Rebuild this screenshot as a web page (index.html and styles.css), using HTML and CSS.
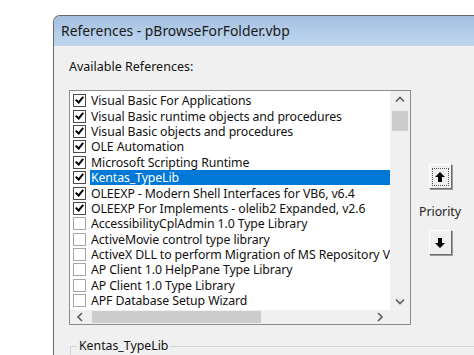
FILE: index.html
```html
<!DOCTYPE html>
<html>
<head>
<meta charset="utf-8">
<link rel="stylesheet" href="styles.css">
</head>
<body>
<div class="dialog">
  <div class="titlebar">References - pBrowseForFolder.vbp</div>
  <div class="client">
    <div class="label">Available References:</div>
    <div class="main">
      <div class="listbox">
        <div class="listarea">
          <div class="items">
            <div class="item"><span class="cb on"></span><span class="txt">Visual Basic For Applications</span></div>
            <div class="item"><span class="cb on"></span><span class="txt">Visual Basic runtime objects and procedures</span></div>
            <div class="item"><span class="cb on"></span><span class="txt">Visual Basic objects and procedures</span></div>
            <div class="item"><span class="cb on"></span><span class="txt">OLE Automation</span></div>
            <div class="item"><span class="cb on"></span><span class="txt">Microsoft Scripting Runtime</span></div>
            <div class="item sel"><span class="cb on"></span><span class="txt">Kentas_TypeLib</span></div>
            <div class="item"><span class="cb on"></span><span class="txt">OLEEXP - Modern Shell Interfaces for VB6, v6.4</span></div>
            <div class="item"><span class="cb on"></span><span class="txt">OLEEXP For Implements - olelib2 Expanded, v2.6</span></div>
            <div class="item"><span class="cb"></span><span class="txt">AccessibilityCplAdmin 1.0 Type Library</span></div>
            <div class="item"><span class="cb"></span><span class="txt">ActiveMovie control type library</span></div>
            <div class="item"><span class="cb"></span><span class="txt">ActiveX DLL to perform Migration of MS Repository V1</span></div>
            <div class="item"><span class="cb"></span><span class="txt">AP Client 1.0 HelpPane Type Library</span></div>
            <div class="item"><span class="cb"></span><span class="txt">AP Client 1.0 Type Library</span></div>
            <div class="item"><span class="cb"></span><span class="txt">APF Database Setup Wizard</span></div>
          </div>
          <div class="vscroll">
            <svg class="arr" width="20" height="17" viewBox="0 0 20 17"><path d="M6 10.5 L10 6.5 L14 10.5" fill="none" stroke="#606060" stroke-width="1.7"/></svg>
            <div class="vthumb"></div>
            <div class="vfill"></div>
            <svg class="arr" width="20" height="17" viewBox="0 0 20 17"><path d="M6 6.5 L10 10.5 L14 6.5" fill="none" stroke="#606060" stroke-width="1.7"/></svg>
          </div>
        </div>
        <div class="hrow">
          <div class="hscroll">
            <svg class="harr" width="20" height="14" viewBox="0 0 20 14"><path d="M12 3 L8 7 L12 11" fill="none" stroke="#606060" stroke-width="1.7"/></svg>
            <div class="hthumb"></div>
            <div class="hfill"></div>
            <svg class="harr" width="20" height="14" viewBox="0 0 20 14"><path d="M8 3 L12 7 L8 11" fill="none" stroke="#606060" stroke-width="1.7"/></svg>
          </div>
          <div class="corner"></div>
        </div>
      </div>
      <div class="side">
        <div class="btn"><span class="focusrect"><svg width="12" height="12" viewBox="0 0 12 12"><path d="M6 1 L11 6 L8 6 L8 11 L4 11 L4 6 L1 6 Z" fill="#000"/></svg></span></div>
        <div class="prio">Priority</div>
        <div class="btn"><svg width="12" height="12" viewBox="0 0 12 12"><path d="M6 11 L11 6 L8 6 L8 1 L4 1 L4 6 L1 6 Z" fill="#000"/></svg></div>
      </div>
    </div>
    <div class="group"><div class="glabel">Kentas_TypeLib</div></div>
  </div>
</div>
</body>
</html>
```
FILE: styles.css
```css
html, body {
  margin: 0;
  padding: 0;
  background: #ffffff;
  overflow: hidden;
  width: 474px;
  height: 355px;
}
body {
  font-family: "Noto Sans", "Open Sans", sans-serif;
  color: #000;
}
.dialog {
  margin-left: 53px;
  margin-top: 15px;
  width: 440px;
  height: 345px;
  border-left: 1px solid #6a6a6a;
  border-top: 1px solid #6a6a6a;
  border-radius: 7px 0 0 0;
  overflow: hidden;
  background: #f0f0f0;
}
.titlebar {
  height: 29px;
  line-height: 30px;
  padding-left: 7px;
  font-size: 13.9px;
  color: #1a1a1a;
  background: linear-gradient(to bottom, #a3bfdf 0%, #b5cee9 60%, #bcd4ee 100%);
  border-bottom: 1px solid #c6d6e8;
}
.client {
  padding-left: 15px;
  padding-top: 13px;
}
.label {
  font-size: 12.5px;
  line-height: 16px;
  color: #111;
}
.main {
  display: flex;
  margin-top: 15px;
}
.listbox {
  width: 340px;
  height: 233px;
  border: 1px solid #8c8c8c;
  background: #fff;
  display: flex;
  flex-direction: column;
}
.listarea {
  display: flex;
  height: 219px;
}
.items {
  flex: 1;
  overflow: hidden;
  padding-top: 2px;
}
.item {
  display: flex;
  align-items: center;
  height: 15.4px;
  font-size: 12.3px;
  white-space: nowrap;
  letter-spacing: -0.1px;
}
.cb {
  flex: none;
  width: 11px;
  height: 11px;
  border: 1px solid #a6a6a6;
  background: #fff;
  margin-left: 3px;
  margin-right: 4px;
  position: relative;
}
.cb.on {
  border-color: #4a4a4a;
}
.cb.on::after {
  content: "";
  position: absolute;
  left: 3px;
  top: 0px;
  width: 3px;
  height: 6px;
  border-right: 2px solid #000;
  border-bottom: 2px solid #000;
  transform: rotate(40deg);
}
.txt {
  padding-left: 1px;
  line-height: 15px;
  color: #111;
}
.item.sel .txt {
  flex: 1;
  background: #0078d7;
  color: #fff;
}
.vscroll {
  width: 20px;
  flex: none;
  background: #f0f0f0;
  display: flex;
  flex-direction: column;
}
.arr {
  display: block;
  flex: none;
}
.vthumb {
  height: 20px;
  margin: 3px 2px 0;
  background: #cdcdcd;
  flex: none;
}
.vfill {
  flex: 1;
}
.hrow {
  display: flex;
  height: 14px;
}
.hscroll {
  flex: 1;
  display: flex;
  background: #f0f0f0;
}
.harr {
  display: block;
  flex: none;
}
.hthumb {
  width: 169px;
  margin: 1px 0 1px 2px;
  background: #cdcdcd;
}
.hfill {
  flex: 1;
}
.corner {
  width: 20px;
  background: #f0f0f0;
}
.side {
  width: 58px;
  display: flex;
  flex-direction: column;
  align-items: center;
  padding-top: 74px;
}
.btn {
  width: 21px;
  height: 23px;
  background: #f0f0f0;
  border-top: 1px solid #fff;
  border-left: 1px solid #fff;
  border-right: 1px solid #6e6e6e;
  border-bottom: 1px solid #6e6e6e;
  box-shadow: 1px 1px 0 #9a9a9a;
  display: flex;
  align-items: center;
  justify-content: center;
}
.focusrect {
  display: flex;
  align-items: center;
  justify-content: center;
  width: 15px;
  height: 16px;
  border: 1px dotted #555;
}
.prio {
  font-size: 12.3px;
  color: #222;
  margin-top: 15px;
  margin-bottom: 10px;
  line-height: 16px;
}
.group {
  margin-left: 1px;
  margin-top: 21px;
  border-top: 1px solid #d4d4d4;
  border-left: 1px solid #d4d4d4;
  height: 20px;
  font-size: 12.3px;
  line-height: 16px;
}
.glabel {
  width: fit-content;
  margin-top: -9px;
  margin-left: 6px;
  padding: 0 2px;
  background: #f0f0f0;
  color: #111;
}
```
